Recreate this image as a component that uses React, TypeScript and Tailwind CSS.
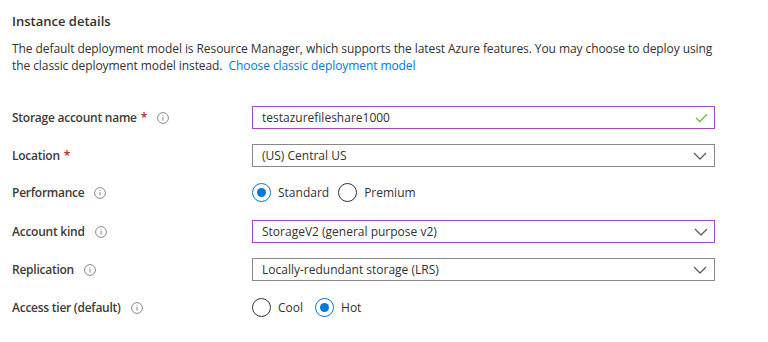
import React from "react";

const font = { fontFamily: '"Open Sans", "Noto Sans", sans-serif' };

function Info() {
  return (
    <svg width="12" height="12" viewBox="0 0 12 12" className="ml-[10px] shrink-0">
      <circle cx="6" cy="6" r="5.4" fill="none" stroke="#8a8886" strokeWidth="1" />
      <rect x="5.5" y="5" width="1" height="3.6" fill="#8a8886" />
      <rect x="5.5" y="3.2" width="1" height="1" fill="#8a8886" />
    </svg>
  );
}

function Chevron() {
  return (
    <svg width="14" height="8" viewBox="0 0 14 8" className="shrink-0">
      <path d="M1 1 L7 7 L13 1" fill="none" stroke="#605e5c" strokeWidth="1.3" />
    </svg>
  );
}

function Check() {
  return (
    <svg width="13" height="10" viewBox="0 0 13 10" className="shrink-0">
      <path d="M1 5 L4.8 8.6 L12 1.2" fill="none" stroke="#7fba3b" strokeWidth="1.4" />
    </svg>
  );
}

function Radio({ checked, label }: { checked?: boolean; label: string }) {
  return (
    <div className="flex items-center">
      <span
        className={
          checked
            ? "flex h-[19px] w-[19px] items-center justify-center rounded-full border border-[#0078d4]"
            : "flex h-[19px] w-[19px] items-center justify-center rounded-full border border-[#323130]"
        }
      >
        {checked && <span className="h-[9px] w-[9px] rounded-full bg-[#0078d4]" />}
      </span>
      <span className="ml-[7px] text-[12px] text-[#323130]">{label}</span>
    </div>
  );
}

function Label({ text, req, info }: { text: string; req?: boolean; info?: boolean }) {
  return (
    <div className="flex w-[240px] shrink-0 items-center text-[12px] font-semibold tracking-[-0.25px] text-[#3b3a39]">
      <span>{text}</span>
      {req && <span className="ml-[4px] text-[#a4262c]">*</span>}
      {info && <Info />}
    </div>
  );
}

function Field({ value, purple, kind }: { value: string; purple?: boolean; kind: "check" | "chev" }) {
  return (
    <div
      className={
        purple
          ? "flex h-[23px] w-[463px] items-center justify-between border border-[#a24bc1] pl-[9px] pr-[6px]"
          : "flex h-[23px] w-[463px] items-center justify-between border border-[#8a8886] pl-[9px] pr-[7px]"
      }
    >
      <span className="text-[12px] text-[#323130]">{value}</span>
      {kind === "check" ? <Check /> : <Chevron />}
    </div>
  );
}

export default function App() {
  return (
    <div className="h-[342px] w-[768px] bg-white px-3 pt-[12px]" style={font}>
      <div className="text-[13px] font-semibold leading-[18px] text-[#323130]">Instance details</div>
      <p className="mt-[10px] w-[720px] text-[12px] leading-[17px] tracking-[-0.08px] text-[#323130]">
        The default deployment model is Resource Manager, which supports the latest Azure features. You may choose to deploy using
        the classic deployment model instead.{"\u00a0\u00a0"}<span className="text-[#0078d4]">Choose classic deployment model</span>
      </p>
      <div className="mt-[32px] flex flex-col">
        <div className="flex h-[23px] items-center">
          <Label text="Storage account name" req info />
          <Field value="testazurefileshare1000" purple kind="check" />
        </div>
        <div className="mt-[15px] flex h-[23px] items-center">
          <Label text="Location" req />
          <Field value="(US) Central US" kind="chev" />
        </div>
        <div className="mt-[14px] flex h-[23px] items-center">
          <Label text="Performance" info />
          <div className="flex items-center gap-[9px]">
            <Radio checked label="Standard" />
            <Radio label="Premium" />
          </div>
        </div>
        <div className="mt-[16px] flex h-[23px] items-center">
          <Label text="Account kind" info />
          <Field value="StorageV2 (general purpose v2)" purple kind="chev" />
        </div>
        <div className="mt-[15px] flex h-[23px] items-center">
          <Label text="Replication" info />
          <Field value="Locally-redundant storage (LRS)" kind="chev" />
        </div>
        <div className="mt-[15px] flex h-[23px] items-center">
          <Label text="Access tier (default)" info />
          <div className="flex items-center gap-[12px]">
            <Radio label="Cool" />
            <Radio checked label="Hot" />
          </div>
        </div>
      </div>
    </div>
  );
}
